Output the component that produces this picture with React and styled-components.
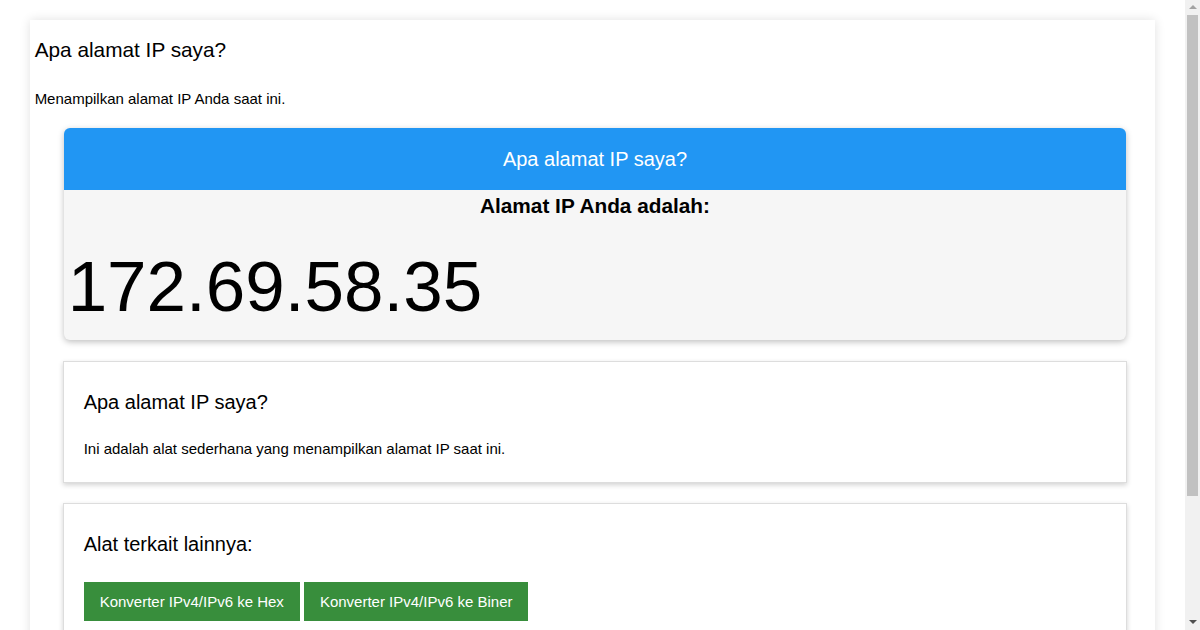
import React from "react";
import styled, { createGlobalStyle } from "styled-components";

const GlobalStyle = createGlobalStyle`
  html, body {
    margin: 0;
    padding: 0;
    background: #fff;
  }
  body {
    font-family: "Liberation Sans", Arial, sans-serif;
    color: #000;
  }
`;

const Page = styled.div`
  margin-right: 15px;
  padding: 20px 0 40px;
`;

const Container = styled.main`
  width: 95%;
  margin: 0 auto;
  padding: 0 5px 60px;
  box-sizing: border-box;
  background: #fff;
  box-shadow: 0 0 10px rgba(0, 0, 0, 0.12);
`;

const PageTitle = styled.h1`
  font-size: 20.8px;
  font-weight: normal;
  margin: 0;
  padding-top: 18px;
`;

const Lead = styled.p`
  font-size: 15px;
  margin: 28px 0 21px;
`;

const Column = styled.div`
  margin: 0 24px 0 29px;
  display: flex;
  flex-direction: column;
  gap: 20px;
`;

const IpCard = styled.section`
  background: #f6f6f6;
  border-radius: 6px;
  overflow: hidden;
  box-shadow: 0 2px 6px rgba(0, 0, 0, 0.25);
  margin-bottom: 1px;
`;

const IpHeader = styled.div`
  background: #2196f3;
  color: #fff;
  height: 62px;
  display: flex;
  align-items: center;
  justify-content: center;
  font-size: 20px;
`;

const IpLabel = styled.h2`
  margin: 0;
  padding-top: 4px;
  font-size: 20.8px;
  font-weight: bold;
  text-align: center;
`;

const IpValue = styled.div`
  font-size: 71px;
  margin: 28px 0 0 4px;
  padding-bottom: 13px;
`;

const Card = styled.section`
  background: #fff;
  border: 1px solid #ddd;
  margin: 0 -1px;
  padding: 20px;
  box-shadow: 0 2px 5px rgba(0, 0, 0, 0.18);
`;

const CardTitle = styled.h3`
  font-size: 20px;
  font-weight: normal;
  margin: 9px 0 26px;
`;

const CardText = styled.p`
  font-size: 15px;
  margin: 1px 0 5px;
`;

const Buttons = styled.div`
  display: flex;
  gap: 4px;
  margin-bottom: 80px;
`;

const ToolButton = styled.a`
  display: inline-block;
  background: #388e3c;
  color: #fff;
  font-size: 15px;
  padding: 11px 16px;
  text-decoration: none;
`;

/* browser scrollbar, drawn over the right edge */
const ScrollTrack = styled.div`
  position: fixed;
  top: 0;
  right: 0;
  width: 15px;
  height: 100vh;
  background: #f1f1f1;
  display: flex;
  flex-direction: column;
  align-items: center;
`;

const Arrow = styled.div`
  width: 0;
  height: 0;
  margin: 5px 0 6px;
  border-left: 4px solid transparent;
  border-right: 4px solid transparent;
  ${(p) =>
    p.down
      ? `border-top: 4px solid #505050; margin: auto 0 6px;`
      : `border-bottom: 4px solid #a3a3a3;`}
`;

const Thumb = styled.div`
  width: 11px;
  height: 481px;
  background: #c1c1c1;
`;

export default function App() {
  return (
    <>
      <GlobalStyle />
      <Page>
        <Container>
          <PageTitle>Apa alamat IP saya?</PageTitle>
          <Lead>Menampilkan alamat IP Anda saat ini.</Lead>
          <Column>
            <IpCard>
              <IpHeader>Apa alamat IP saya?</IpHeader>
              <IpLabel>Alamat IP Anda adalah:</IpLabel>
              <IpValue>172.69.58.35</IpValue>
            </IpCard>
            <Card>
              <CardTitle>Apa alamat IP saya?</CardTitle>
              <CardText>
                Ini adalah alat sederhana yang menampilkan alamat IP saat ini.
              </CardText>
            </Card>
            <Card>
              <CardTitle>Alat terkait lainnya:</CardTitle>
              <Buttons>
                <ToolButton href="#">Konverter IPv4/IPv6 ke Hex</ToolButton>
                <ToolButton href="#">Konverter IPv4/IPv6 ke Biner</ToolButton>
              </Buttons>
            </Card>
          </Column>
        </Container>
      </Page>
      <ScrollTrack>
        <Arrow />
        <Thumb />
        <Arrow down />
      </ScrollTrack>
    </>
  );
}
